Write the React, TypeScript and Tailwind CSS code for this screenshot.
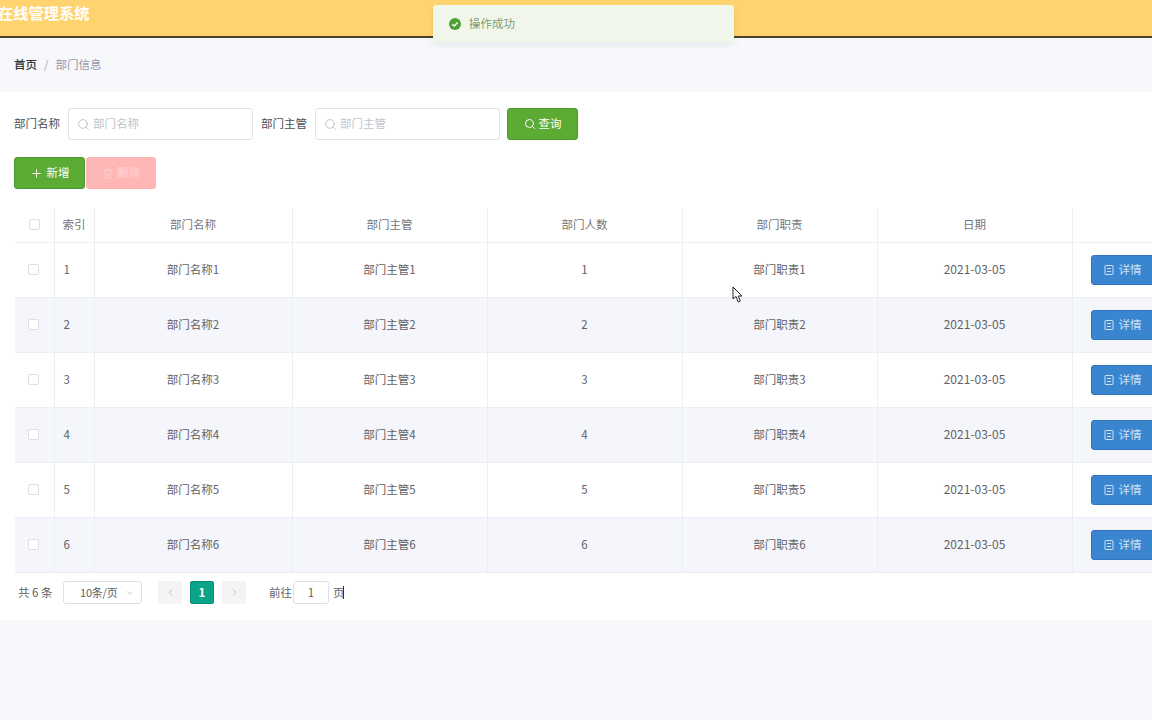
import React from 'react';
import { ChevronDown, ChevronLeft, ChevronRight, Plus, Search, Trash2 } from 'lucide-react';

const rows = [1, 2, 3, 4, 5, 6];
const font = '"Noto Sans CJK SC", "Noto Sans", sans-serif';

function SearchField({ placeholder }: { placeholder: string }) {
  return (
    <div className="flex h-[32px] w-[185px] items-center rounded-[3px] border border-[#dfe1e6] bg-white pl-[8px]">
      <Search size={13} strokeWidth={1.5} className="text-[#b4b8c0]" />
      <span className="ml-[3px] text-[11.5px] text-[#c0c4cc]">{placeholder}</span>
    </div>
  );
}

function Checkbox({ className }: { className: string }) {
  return <span className={`block h-[11px] w-[11px] rounded-[2px] border border-[#dcdfe6] bg-white ${className}`} />;
}

export default function App() {
  return (
    <div className="relative h-[720px] w-[1152px] overflow-hidden bg-[#f7f8fb] text-[#606266]" style={{ fontFamily: font }}>
      <header className="h-[38px] border-b-2 border-[#4a4226] bg-[#ffd470]">
        <h1 className="-ml-[2px] pt-[1px] text-[15.25px] font-bold leading-[22px] text-white">在线管理系统</h1>
      </header>

      <nav className="flex h-[54px] items-center pl-[14px] text-[11.5px]">
        <span className="font-medium text-[#303133]">首页</span>
        <span className="mx-[7px] text-[#a8abb2]">/</span>
        <span className="text-[#9497ad]">部门信息</span>
      </nav>

      <main className="h-[528px] bg-white pl-[14px] pt-[16px]">
        <div className="flex items-center text-[11.5px]">
          <span className="w-[54px] text-[#4c4e52]">部门名称</span>
          <SearchField placeholder="部门名称" />
          <span className="ml-[8px] w-[54px] text-[#4c4e52]">部门主管</span>
          <SearchField placeholder="部门主管" />
          <button className="ml-[7px] flex h-[32px] w-[71px] items-center justify-center gap-[3px] rounded-[3px] border border-[#4f9a2c] bg-[#5bab35] text-white">
            <Search size={12} strokeWidth={2} />
            查询
          </button>
        </div>

        <div className="mt-[17px] flex text-[11.5px] text-white">
          <button className="flex h-[32px] w-[71px] items-center justify-center gap-[4px] rounded-[3px] border border-[#4f9a2c] bg-[#5bab35]">
            <Plus size={13} strokeWidth={1.75} />
            新增
          </button>
          <button className="ml-[1px] flex h-[32px] w-[70px] items-center justify-center gap-[4px] rounded-[3px] border border-[#ffb3b3] bg-[#ffb6b6] text-[#ffd6d6]">
            <Trash2 size={11} strokeWidth={1.5} />
            删除
          </button>
        </div>

        <table className="ml-[1px] mt-[19px] w-[1200px] table-fixed border-collapse text-center text-[11.5px]">
          <colgroup>
            <col className="w-[39px]" />
            <col className="w-[40px]" />
            <col className="w-[198px]" />
            <col className="w-[195px]" />
            <col className="w-[195px]" />
            <col className="w-[195px]" />
            <col className="w-[195px]" />
            <col className="w-[143px]" />
          </colgroup>
          <thead>
            <tr className="h-[34px] border-b border-[#ebeef5] text-[#73767c]">
              <th className="border-r border-[#ebeef5] font-normal"><Checkbox className="mx-auto" /></th>
              <th className="border-r border-[#ebeef5] font-normal">索引</th>
              <th className="border-r border-[#ebeef5] font-normal">部门名称</th>
              <th className="border-r border-[#ebeef5] font-normal">部门主管</th>
              <th className="border-r border-[#ebeef5] font-normal">部门人数</th>
              <th className="border-r border-[#ebeef5] font-normal">部门职责</th>
              <th className="border-r border-[#ebeef5] font-normal">日期</th>
              <th className="font-normal" />
            </tr>
          </thead>
          <tbody>
            {rows.map((n) => (
              <tr key={n} className={`h-[55px] border-b border-[#ebeef5] ${n % 2 === 0 ? 'bg-[#f5f6fb]' : 'bg-white'}`}>
                <td className="border-r border-[#ebeef5]"><Checkbox className="ml-[13px]" /></td>
                <td className="border-r border-[#ebeef5] pl-[9px] text-left">{n}</td>
                <td className="border-r border-[#ebeef5]">部门名称{n}</td>
                <td className="border-r border-[#ebeef5]">部门主管{n}</td>
                <td className="border-r border-[#ebeef5]">{n}</td>
                <td className="border-r border-[#ebeef5]">部门职责{n}</td>
                <td className="border-r border-[#ebeef5] pb-[1px] text-[12px]">2021-03-05</td>
                <td className="pl-[18px]">
                  <button className="flex h-[30px] w-[70px] items-center justify-start gap-[5px] rounded-[3px] border border-[#2f74bd] bg-[#3a85d0] pl-[12px] text-[#cfe0f2]">
                    <svg viewBox="0 0 10 10" className="h-[10px] w-[10px]" fill="none" stroke="currentColor" strokeWidth="1">
                      <rect x="1" y="0.5" width="8" height="9" rx="0.5" />
                      <path d="M3 3.5h4M3 6.5h4" />
                    </svg>
                    详情
                  </button>
                </td>
              </tr>
            ))}
          </tbody>
        </table>

        <div className="mt-[8px] flex h-[24px] items-center pl-[4px] text-[11.5px]">
          <span className="w-[45px]">共 6 条</span>
          <div className="flex h-[23px] w-[79px] items-center justify-between rounded-[3px] border border-[#dcdfe6] pl-[16px] pr-[6px]">
            <span className="text-[11px] tracking-[-0.2px]">10条/页</span>
            <ChevronDown size={10} className="text-[#b4b8c0]" />
          </div>
          <span className="ml-[16px] flex h-[23px] w-[24px] items-center justify-center rounded-[2px] bg-[#f4f4f5] text-[#b8bbc2]">
            <ChevronLeft size={11} />
          </span>
          <span className="ml-[8px] flex h-[23px] w-[24px] items-center justify-center rounded-[2px] border border-[#0b8f78] bg-[#0aa48a] font-bold text-white">1</span>
          <span className="ml-[8px] flex h-[23px] w-[24px] items-center justify-center rounded-[2px] bg-[#f4f4f5] text-[#b8bbc2]">
            <ChevronRight size={11} />
          </span>
          <span className="ml-[23px]">前往</span>
          <span className="ml-[1px] flex h-[23px] w-[36px] items-center justify-center rounded-[3px] border border-[#dcdfe6]">1</span>
          <span className="ml-[4px]">页</span>
          <span className="-ml-[2px] h-[13px] w-px bg-[#303133]" />
        </div>
      </main>

      <div className="absolute left-[433px] top-[5px] flex h-[37px] w-[301px] items-center rounded-[3px] bg-[#f0f7ea] pl-[16px] text-[11.5px] text-[#7f9a72] shadow-[0_2px_8px_rgba(0,0,0,0.08)]">
        <svg viewBox="0 0 12 12" className="h-[12px] w-[12px]">
          <circle cx="6" cy="6" r="6" fill="#4f9f35" />
          <path d="M3.3 6.2 5.2 8 8.7 4.4" fill="none" stroke="#fff" strokeWidth="1.4" />
        </svg>
        <span className="ml-[8px]">操作成功</span>
      </div>

      <svg viewBox="0 0 11 17" className="absolute left-[732px] top-[286px] h-[17px] w-[11px]">
        <path d="M1 1v12l3-2.6L6.2 16l2.2-1-2.2-5H10z" fill="#fff" stroke="#222" strokeWidth="1" />
      </svg>
    </div>
  );
}
